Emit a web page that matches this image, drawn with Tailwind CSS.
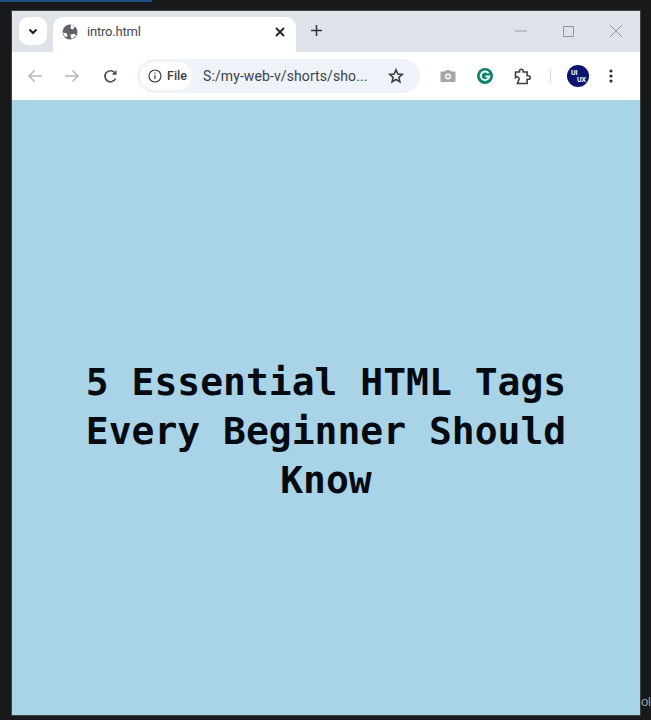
<!DOCTYPE html>
<html lang="en">
<head>
    <meta charset="UTF-8">
    <meta name="viewport" content="width=device-width, initial-scale=1.0">
    <title>intro.html</title>
    <script src="https://cdn.jsdelivr.net/npm/@tailwindcss/browser@4"></script>
</head>
<body class="bg-[#18191b] h-[720px] w-[651px] overflow-hidden relative font-['Roboto',sans-serif]">
    <!-- top edge of the editor behind the window -->
    <div class="absolute top-0 left-0 w-[152px] h-[2px] bg-[#1c4f86]"></div>
    <div class="absolute top-[10px] left-[11px] right-[10px] bottom-[4px] border border-[#3c4043]"></div>
    <div class="absolute right-0 bottom-[12px] text-[13px] leading-none text-[#9aa0a6] font-['Liberation_Sans',sans-serif]">ol</div>

    <div class="absolute top-[11px] left-[12px] w-[628px] h-[704px] flex flex-col">
        <!-- Tab strip -->
        <div class="h-[41px] bg-[#dee3e9] flex shrink-0 relative">
            <div class="w-[41px] flex items-start pt-[6px] pl-[7px]">
                <div class="w-[28px] h-[28px] bg-white rounded-[9px] flex items-center justify-center">
                    <svg width="12" height="12" viewBox="0 0 12 12" fill="none" stroke="#1f1f1f" stroke-width="2"><path d="M2.5 4.5 6 8l3.500-3.500"/></svg>
                </div>
            </div>
            <div class="w-[243px] h-[35px] mt-[6px] pb-[5px] bg-white rounded-t-[10px] flex items-center">
                <svg class="ml-[9px]" width="16" height="16" viewBox="0 0 16 16"><circle cx="8" cy="8" r="7.500" fill="#5f6368"/><path d="M9 .8l4 1.500-2 3.200-2.500-1zM8.500 10.500l4-.8 1.500 1.800-3.500 3.300-1.500-.8zM1 8.500l4 1 .5 3-2 .5A7.500 7.500 0 0 1 1 8.500z" fill="#fff"/></svg>
                <span class="ml-[9px] text-[13px] text-[#45484c] tracking-[-0.2px]">intro.html</span>
                <svg class="ml-auto mr-[11px]" width="10" height="10" viewBox="0 0 10 10" stroke="#222" stroke-width="1.800"><path d="M1 1l8 8M9 1 1 9"/></svg>
            </div>
            <div class="ml-[15px] mt-[14px] h-[12px]">
                <svg width="11" height="11" viewBox="0 0 11 11" stroke="#333" stroke-width="1.500"><path d="M5.500 0v11M0 5.500h11"/></svg>
            </div>
            <div class="ml-auto flex items-center h-[40px] pr-[17px]">
                <svg width="12" height="12" viewBox="0 0 12 12" stroke="#a4a8ad" stroke-width="1.200"><path d="M0 6h12"/></svg>
                <svg class="ml-[36px]" width="11" height="11" viewBox="0 0 11 11" fill="none" stroke="#92969b" stroke-width="1"><rect x=".5" y=".5" width="10" height="10"/></svg>
                <svg class="ml-[35px]" width="14" height="14" viewBox="0 0 14 14" stroke="#92969b" stroke-width="1"><path d="M1 1l12 12M13 1 1 13"/></svg>
            </div>
        </div>

        <!-- Toolbar -->
        <div class="h-[48px] bg-white flex items-center shrink-0 relative">
            <svg class="ml-[15px]" width="16" height="14" viewBox="0 0 16 14" fill="none" stroke="#b4b8bc" stroke-width="1.500"><path d="M15 7H2M7.500 1.500 2 7l5.500 5.500"/></svg>
            <svg class="ml-[21px]" width="16" height="14" viewBox="0 0 16 14" fill="none" stroke="#b4b8bc" stroke-width="1.500"><path d="M1 7h13M8.500 1.500 14 7l-5.500 5.500"/></svg>
            <svg class="ml-[23px]" width="15" height="15" viewBox="0 0 15 15" fill="none" stroke="#4b4e52" stroke-width="1.700"><path d="M12.500 9.500A5.500 5.500 0 1 1 11.500 3.500L13 5"/><path d="M13.500 1v4.800H8.800" fill="#4b4e52" stroke="none"/></svg>
            <div class="ml-[19px] w-[283px] h-[34px] bg-[#eef3f9] rounded-full flex items-center">
                <div class="ml-[3px] w-[52px] h-[28px] bg-white rounded-full flex items-center">
                    <svg class="ml-[8px]" width="14" height="14" viewBox="0 0 14 14" fill="none" stroke="#3c4043" stroke-width="1.200"><circle cx="7" cy="7" r="6"/><path d="M7 6v4.200M7 3.400v1.400"/></svg>
                    <span class="ml-[5px] text-[12.500px] font-medium text-[#3c4043]">File</span>
                </div>
                <span class="ml-[11px] text-[14px] tracking-[0.1px] text-[#3f4246] whitespace-nowrap">S:/my-web-v/shorts/sho...</span>
                <svg class="ml-auto mr-[16px]" width="16" height="16" viewBox="0 0 16 16" fill="none" stroke="#3c4043" stroke-width="1.600"><path d="M8 1.800 9.800 6l4.500.4-3.400 3 1 4.400L8 11.500l-3.900 2.300 1-4.400-3.400-3L6.200 6z"/></svg>
            </div>
            <svg class="ml-[20px]" width="16" height="14" viewBox="0 0 16 14"><path d="M1.500 2.500h3.300L6 1h4l1.200 1.500h3.300a1 1 0 0 1 1 1V12a1 1 0 0 1-1 1h-13a1 1 0 0 1-1-1V3.500a1 1 0 0 1 1-1z" fill="#a3a6aa"/><circle cx="8" cy="7.500" r="3" fill="#fff"/><circle cx="8" cy="7.500" r="1.600" fill="#a3a6aa"/></svg>
            <svg class="ml-[21px]" width="16" height="16" viewBox="0 0 16 16"><circle cx="8" cy="8" r="8" fill="#10836c"/><path d="M11.500 5.200A4.300 4.300 0 1 0 12.300 8.500H8.500" fill="none" stroke="#fff" stroke-width="1.800"/></svg>
            <svg class="ml-[21px]" width="17" height="17" viewBox="0 0 17 17" fill="none" stroke="#3c4043" stroke-width="1.600"><path d="M1.500 4h4V3a1.800 1.800 0 0 1 3.600 0v1h4v3.700h1.300a1.800 1.800 0 0 1 0 3.600h-1.300v4.200H3.500l1-3a1.500 1.500 0 0 0-3-3z"/></svg>
            <div class="ml-[19px] w-px h-[14px] bg-[#d5d9de]"></div>
            <div class="ml-[16px] w-[22px] h-[22px] rounded-full bg-[#0d1470] relative font-bold text-white text-[7px] leading-none">
                <span class="absolute left-[4px] top-[5px]">UI</span>
                <span class="absolute left-[10px] top-[12px]">UX</span>
            </div>
            <svg class="ml-[20px]" width="4" height="14" viewBox="0 0 4 14" fill="#303134"><circle cx="2" cy="2" r="1.600"/><circle cx="2" cy="7" r="1.600"/><circle cx="2" cy="12" r="1.600"/></svg>
        </div>

        <!-- Page -->
        <div class="flex-1 bg-[#a9d4e7] flex items-center justify-center px-[60px] pt-[47px]">
            <h1 class="text-[38px] leading-[49px] font-bold text-center text-[#050a10] font-['DejaVu_Sans_Mono',monospace]">5 Essential HTML Tags Every Beginner Should Know</h1>
        </div>
    </div>
</body>
</html>
